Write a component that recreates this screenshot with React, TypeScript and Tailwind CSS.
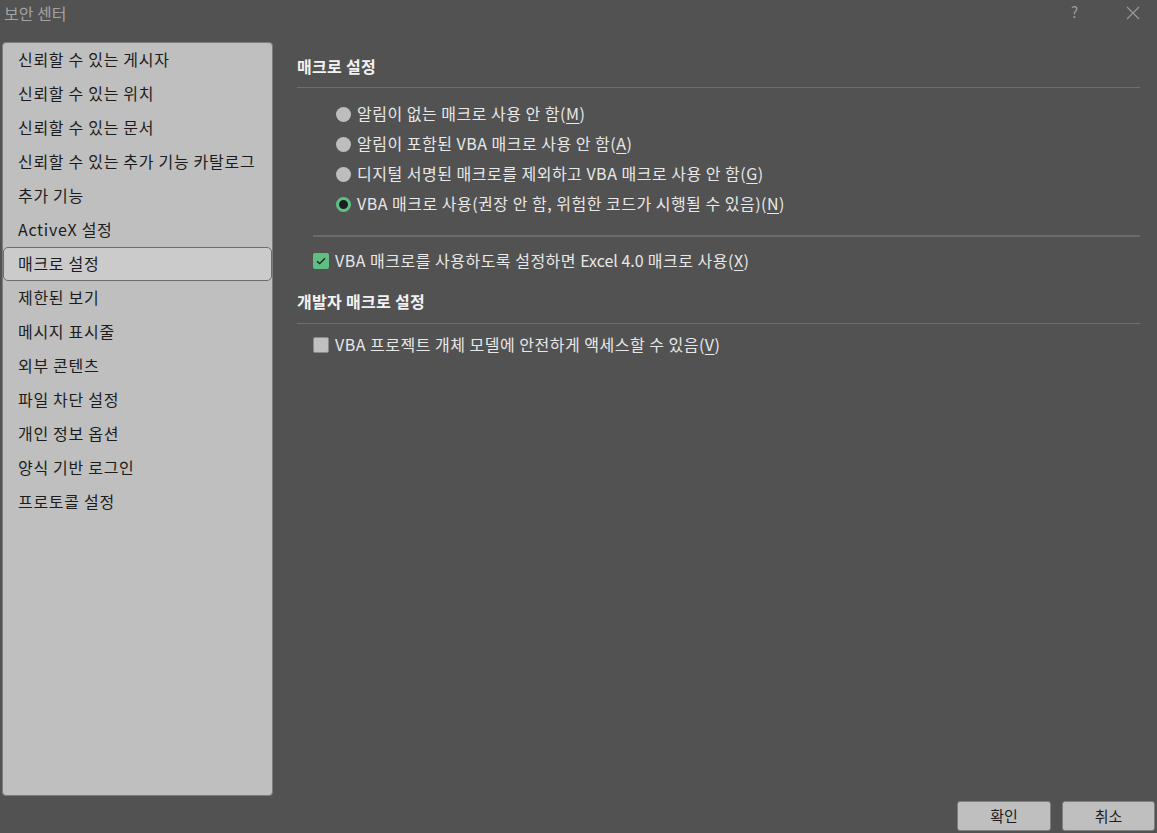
import React from "react";

const navItems = [
  "신뢰할 수 있는 게시자",
  "신뢰할 수 있는 위치",
  "신뢰할 수 있는 문서",
  "신뢰할 수 있는 추가 기능 카탈로그",
  "추가 기능",
  "ActiveX 설정",
  "매크로 설정",
  "제한된 보기",
  "메시지 표시줄",
  "외부 콘텐츠",
  "파일 차단 설정",
  "개인 정보 옵션",
  "양식 기반 로그인",
  "프로토콜 설정",
];

const macroOptions = [
  { label: "알림이 없는 매크로 사용 안 함", key: "M", checked: false },
  { label: "알림이 포함된 VBA 매크로 사용 안 함", key: "A", checked: false },
  { label: "디지털 서명된 매크로를 제외하고 VBA 매크로 사용 안 함", key: "G", checked: false },
  { label: "VBA 매크로 사용(권장 안 함, 위험한 코드가 시행될 수 있음)", key: "N", checked: true },
];

const font = { fontFamily: '"Noto Sans CJK KR", sans-serif' };

function Mnemonic({ k }: { k: string }) {
  return (
    <span>
      (<span className="underline underline-offset-[3px]">{k}</span>)
    </span>
  );
}

function Radio({ checked }: { checked: boolean }) {
  if (checked) {
    return (
      <span className="w-[15px] h-[15px] rounded-full border-[3px] border-[#5fbf83] bg-[#1e1e1e] shrink-0" />
    );
  }
  return <span className="w-[15px] h-[15px] rounded-full bg-[#bdbdbd] shrink-0" />;
}

function Checkbox({ checked }: { checked: boolean }) {
  if (checked) {
    return (
      <span className="w-[16px] h-[16px] rounded-[2px] bg-[#5fbf83] flex items-center justify-center shrink-0">
        <svg width="10" height="8" viewBox="0 0 10 8" fill="none">
          <path d="M1 4.2 L3.6 6.6 L9 1.2" stroke="#1e1e1e" strokeWidth="1.3" />
        </svg>
      </span>
    );
  }
  return (
    <span className="w-[16px] h-[16px] rounded-[2px] bg-[#c0c0c0] border border-[#8a8a8a] shrink-0" />
  );
}

export default function App() {
  return (
    <div
      className="w-[1157px] h-[833px] bg-[#525252] flex flex-col overflow-hidden text-[16px]"
      style={font}
    >
      {/* Title bar */}
      <div className="h-[25px] flex items-center">
        <span className="pl-[4px] text-[16px] text-[#a3a3a3] leading-none">보안 센터</span>
        <div className="ml-auto flex items-center">
          <span className="text-[15px] text-[#9a9a9a] mr-[48px]">?</span>
          <svg width="14" height="14" viewBox="0 0 14 14" className="mr-[17px]">
            <path d="M1 1 L13 13 M13 1 L1 13" stroke="#9a9a9a" strokeWidth="1.2" />
          </svg>
        </div>
      </div>

      {/* Body */}
      <div className="flex mt-[17px] h-[754px]">
        {/* Left nav */}
        <div className="ml-[2px] w-[271px] h-[754px] bg-[#bfbfbf] border border-[#7c7c7c] rounded-[4px] flex flex-col tracking-[0.7px]">
          {navItems.map((item) =>
            item === "매크로 설정" ? (
              <div
                key={item}
                className="h-[34px] bg-[#cbcbcb] border border-[#6c6c6c] rounded-[5px] flex items-center pl-[14px] pb-[2px] text-[#1c1c1c]"
              >
                {item}
              </div>
            ) : (
              <div key={item} className="h-[34px] flex items-center pl-[15px] pb-[2px] text-[#1c1c1c]">
                {item}
              </div>
            )
          )}
        </div>

        {/* Right content */}
        <div className="flex-1 ml-[24px] mr-[17px] flex flex-col text-[#e8e8e8] tracking-[0.5px]">
          <div className="mt-[14px] h-[20px] flex items-center font-bold text-[#f2f2f2] tracking-[0.3px]">
            매크로 설정
          </div>
          <div className="mt-[11px] h-px bg-[#6e6e6e]" />
          <div className="mt-[11px] flex flex-col">
            {macroOptions.map((opt) => (
              <div key={opt.key} className="h-[30px] flex items-center pl-[39px] gap-[6px]">
                <Radio checked={opt.checked} />
                <span className="pb-[2px]">
                  {opt.label}
                  <Mnemonic k={opt.key} />
                </span>
              </div>
            ))}
          </div>
          <div className="mt-[16px] ml-[16px] h-[2px] bg-[#6a6a6a]" />
          <div className="mt-[9px] h-[30px] flex items-center pl-[16px] gap-[6px]">
            <Checkbox checked />
            <span className="pb-[2px]">
              VBA 매크로를 사용하도록 설정하면 <span className="tracking-normal">Excel 4.0</span> 매크로 사용
              <Mnemonic k="X" />
            </span>
          </div>
          <div className="mt-[15px] h-[20px] flex items-center font-bold text-[#f2f2f2] tracking-[0.3px]">
            개발자 매크로 설정
          </div>
          <div className="mt-[12px] h-px bg-[#6e6e6e]" />
          <div className="mt-[6px] h-[30px] flex items-center pl-[16px] gap-[6px]">
            <Checkbox checked={false} />
            <span className="pb-[2px]">
              VBA 프로젝트 개체 모델에 안전하게 액세스할 수 있음
              <Mnemonic k="V" />
            </span>
          </div>
        </div>
      </div>

      {/* Footer buttons */}
      <div className="flex justify-end gap-[11px] pr-[2px] mt-[5px]">
        <button className="w-[94px] h-[30px] bg-[#bfbfbf] border border-[#7e7e7e] rounded-[3px] text-[#1c1c1c] text-[15px]">
          확인
        </button>
        <button className="w-[93px] h-[30px] bg-[#bfbfbf] border border-[#7e7e7e] rounded-[3px] text-[#1c1c1c] text-[15px]">
          취소
        </button>
      </div>
    </div>
  );
}
